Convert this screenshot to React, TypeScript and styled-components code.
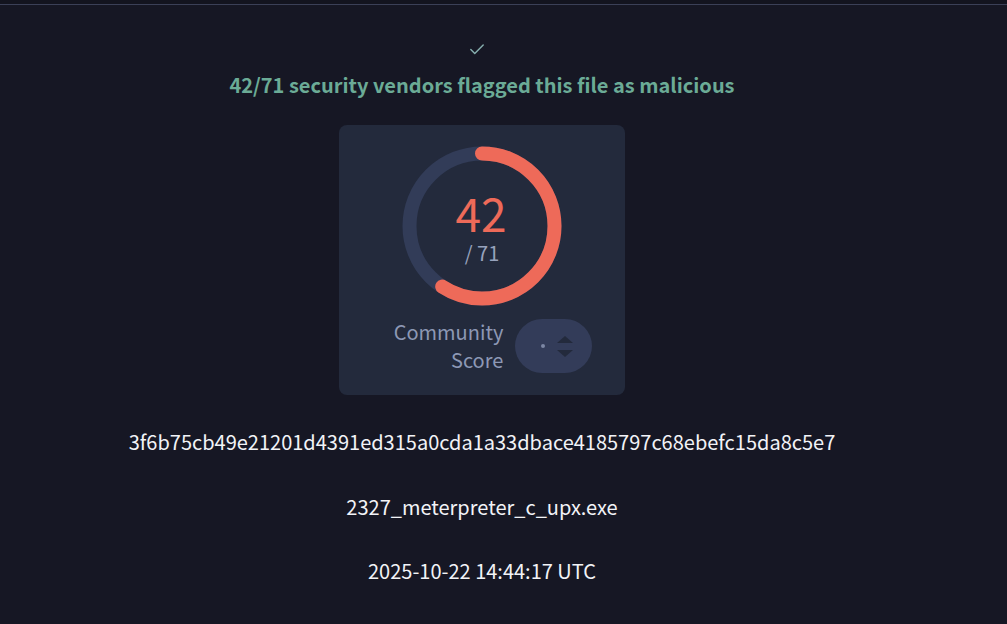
import React from 'react';
import styled, { createGlobalStyle } from 'styled-components';

const GlobalStyle = createGlobalStyle`
	html, body {
		margin: 0;
		padding: 0;
		background: #161724;
	}
	body {
		font-family: 'Noto Sans CJK SC', 'Noto Sans', sans-serif;
	}
`;

const Page = styled.div`
	min-height: 624px;
	background: #161724;
	border-top: 4px solid #13141f;
	box-sizing: border-box;
`;

const TopLine = styled.div`
	height: 1px;
	background: #3b4057;
`;

const Main = styled.main`
	width: 964px;
	display: flex;
	flex-direction: column;
	align-items: center;
	padding-top: 34px;
`;

const Check = styled.div`
	width: 18px;
	height: 18px;
	margin-left: -10px;
	color: #86aeae;
`;

const Headline = styled.h2`
	margin: 14px 0 0;
	font-size: 20px;
	font-weight: 700;
	line-height: 28px;
	color: #6bab96;
`;

const Card = styled.section`
	margin-top: 26px;
	width: 286px;
	height: 270px;
	box-sizing: border-box;
	background: #232a3c;
	border-radius: 8px;
	display: flex;
	flex-direction: column;
	align-items: center;
	padding-top: 21px;
`;

const Gauge = styled.div`
	position: relative;
	width: 160px;
	height: 160px;
`;

const GaugeText = styled.div`
	position: absolute;
	inset: 0;
	display: flex;
	flex-direction: column;
	align-items: center;
	justify-content: center;
	padding-top: 2px;
`;

const Count = styled.div`
	font-size: 46px;
	line-height: 44px;
	color: #ee6a59;
	margin-left: -2px;
`;

const Total = styled.div`
	font-size: 20px;
	line-height: 22px;
	margin-top: 8px;
	color: #97a2bd;
`;

const ScoreRow = styled.div`
	margin-top: 12px;
	display: flex;
	align-items: center;
	gap: 12px;
	margin-left: 22px;
`;

const ScoreLabel = styled.div`
	text-align: right;
	font-size: 20px;
	line-height: 28px;
	color: #8d98b5;
`;

const Pill = styled.div`
	width: 77px;
	height: 54px;
	border-radius: 27px;
	background: #333c59;
	display: flex;
	align-items: center;
	padding-left: 26px;
	box-sizing: border-box;
	gap: 12px;
`;

const Dot = styled.span`
	width: 4px;
	height: 4px;
	border-radius: 50%;
	background: #7d87a4;
`;

const Arrows = styled.div`
	display: flex;
	flex-direction: column;
	gap: 7px;
`;

const Arrow = styled.span<{ $down?: boolean }>`
	width: 0;
	height: 0;
	border-left: 8px solid transparent;
	border-right: 8px solid transparent;
	${({ $down }) => ($down ? 'border-top: 7px solid #232a3c;' : 'border-bottom: 7px solid #232a3c;')}
`;

const InfoLine = styled.div<{ $gap: number }>`
	margin-top: ${({ $gap }) => $gap}px;
	font-size: 20px;
	line-height: 28px;
	color: #f2f3f7;
`;

const RADIUS = 72.5;
const CIRC = 2 * Math.PI * RADIUS;

const App = () => {
	const flagged = 42;
	const total = 71;
	const arc = (flagged / total) * CIRC;

	return (
		<Page>
			<GlobalStyle />
			<TopLine />
			<Main>
				<Check>
					<svg viewBox='0 0 16 16' width='18' height='18' fill='none' stroke='currentColor' strokeWidth='1.3' strokeLinecap='round' strokeLinejoin='round'>
						<path d='M2.5 8.5l3.5 3.5 7.5-7.5' />
					</svg>
				</Check>
				<Headline>
					{flagged}/{total} security vendors flagged this file as malicious
				</Headline>
				<Card>
					<Gauge>
						<svg viewBox='0 0 160 160' width='160' height='160'>
							<circle cx='80' cy='80' r={RADIUS} fill='none' stroke='#323c58' strokeWidth='14' />
							<circle
								cx='80'
								cy='80'
								r={RADIUS}
								fill='none'
								stroke='#ee6a59'
								strokeWidth='14'
								strokeLinecap='round'
								strokeDasharray={`${arc} ${CIRC}`}
								transform='rotate(-90 80 80)'
							/>
						</svg>
						<GaugeText>
							<Count>{flagged}</Count>
							<Total>/ {total}</Total>
						</GaugeText>
					</Gauge>
					<ScoreRow>
						<ScoreLabel>
							Community
							<br />
							Score
						</ScoreLabel>
						<Pill>
							<Dot />
							<Arrows>
								<Arrow />
								<Arrow $down />
							</Arrows>
						</Pill>
					</ScoreRow>
				</Card>
				<InfoLine $gap={33}>3f6b75cb49e21201d4391ed315a0cda1a33dbace4185797c68ebefc15da8c5e7</InfoLine>
				<InfoLine $gap={37}>2327_meterpreter_c_upx.exe</InfoLine>
				<InfoLine $gap={36}>2025-10-22 14:44:17 UTC</InfoLine>
			</Main>
		</Page>
	);
};

export default App;
